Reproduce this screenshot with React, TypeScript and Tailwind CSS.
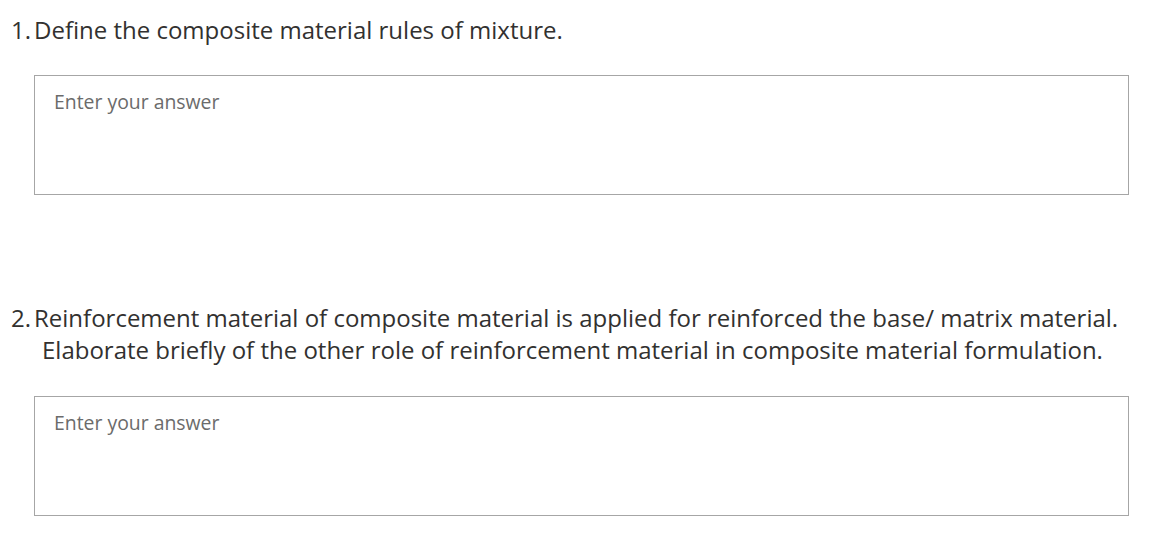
const Answer = () => (
  <div className="ml-[34px] mr-[34px] h-[120px] border border-[#a6a6a6] bg-white px-[19px] pt-[13px]">
    <span className="text-[19.4px] leading-[26px] text-[#6b6b6b]">Enter your answer</span>
  </div>
);

export default function App() {
  return (
    <div
      className="w-[1163px] h-[542px] bg-white text-[#323130]"
      style={{ fontFamily: '"Open Sans", "Noto Sans", sans-serif' }}
    >
      <div className="pt-[14px]">
        <div className="flex pl-[11px] text-[24px] leading-[32px]">
          <span className="w-[23px] shrink-0">1.</span>
          <span>Define the composite material rules of mixture.</span>
        </div>
        <div className="mt-[29px]">
          <Answer />
        </div>
      </div>
      <div className="mt-[107px]">
        <div className="flex pl-[11px] text-[24px] leading-[32px]">
          <span className="w-[23px] shrink-0">2.</span>
          <div>
            <div className="whitespace-nowrap">Reinforcement material of composite material is applied for reinforced the base/ matrix material.</div>
            <div className="whitespace-nowrap pl-[8px]">Elaborate briefly of the other role of reinforcement material in composite material formulation.</div>
          </div>
        </div>
        <div className="mt-[30px]">
          <Answer />
        </div>
      </div>
    </div>
  );
}
